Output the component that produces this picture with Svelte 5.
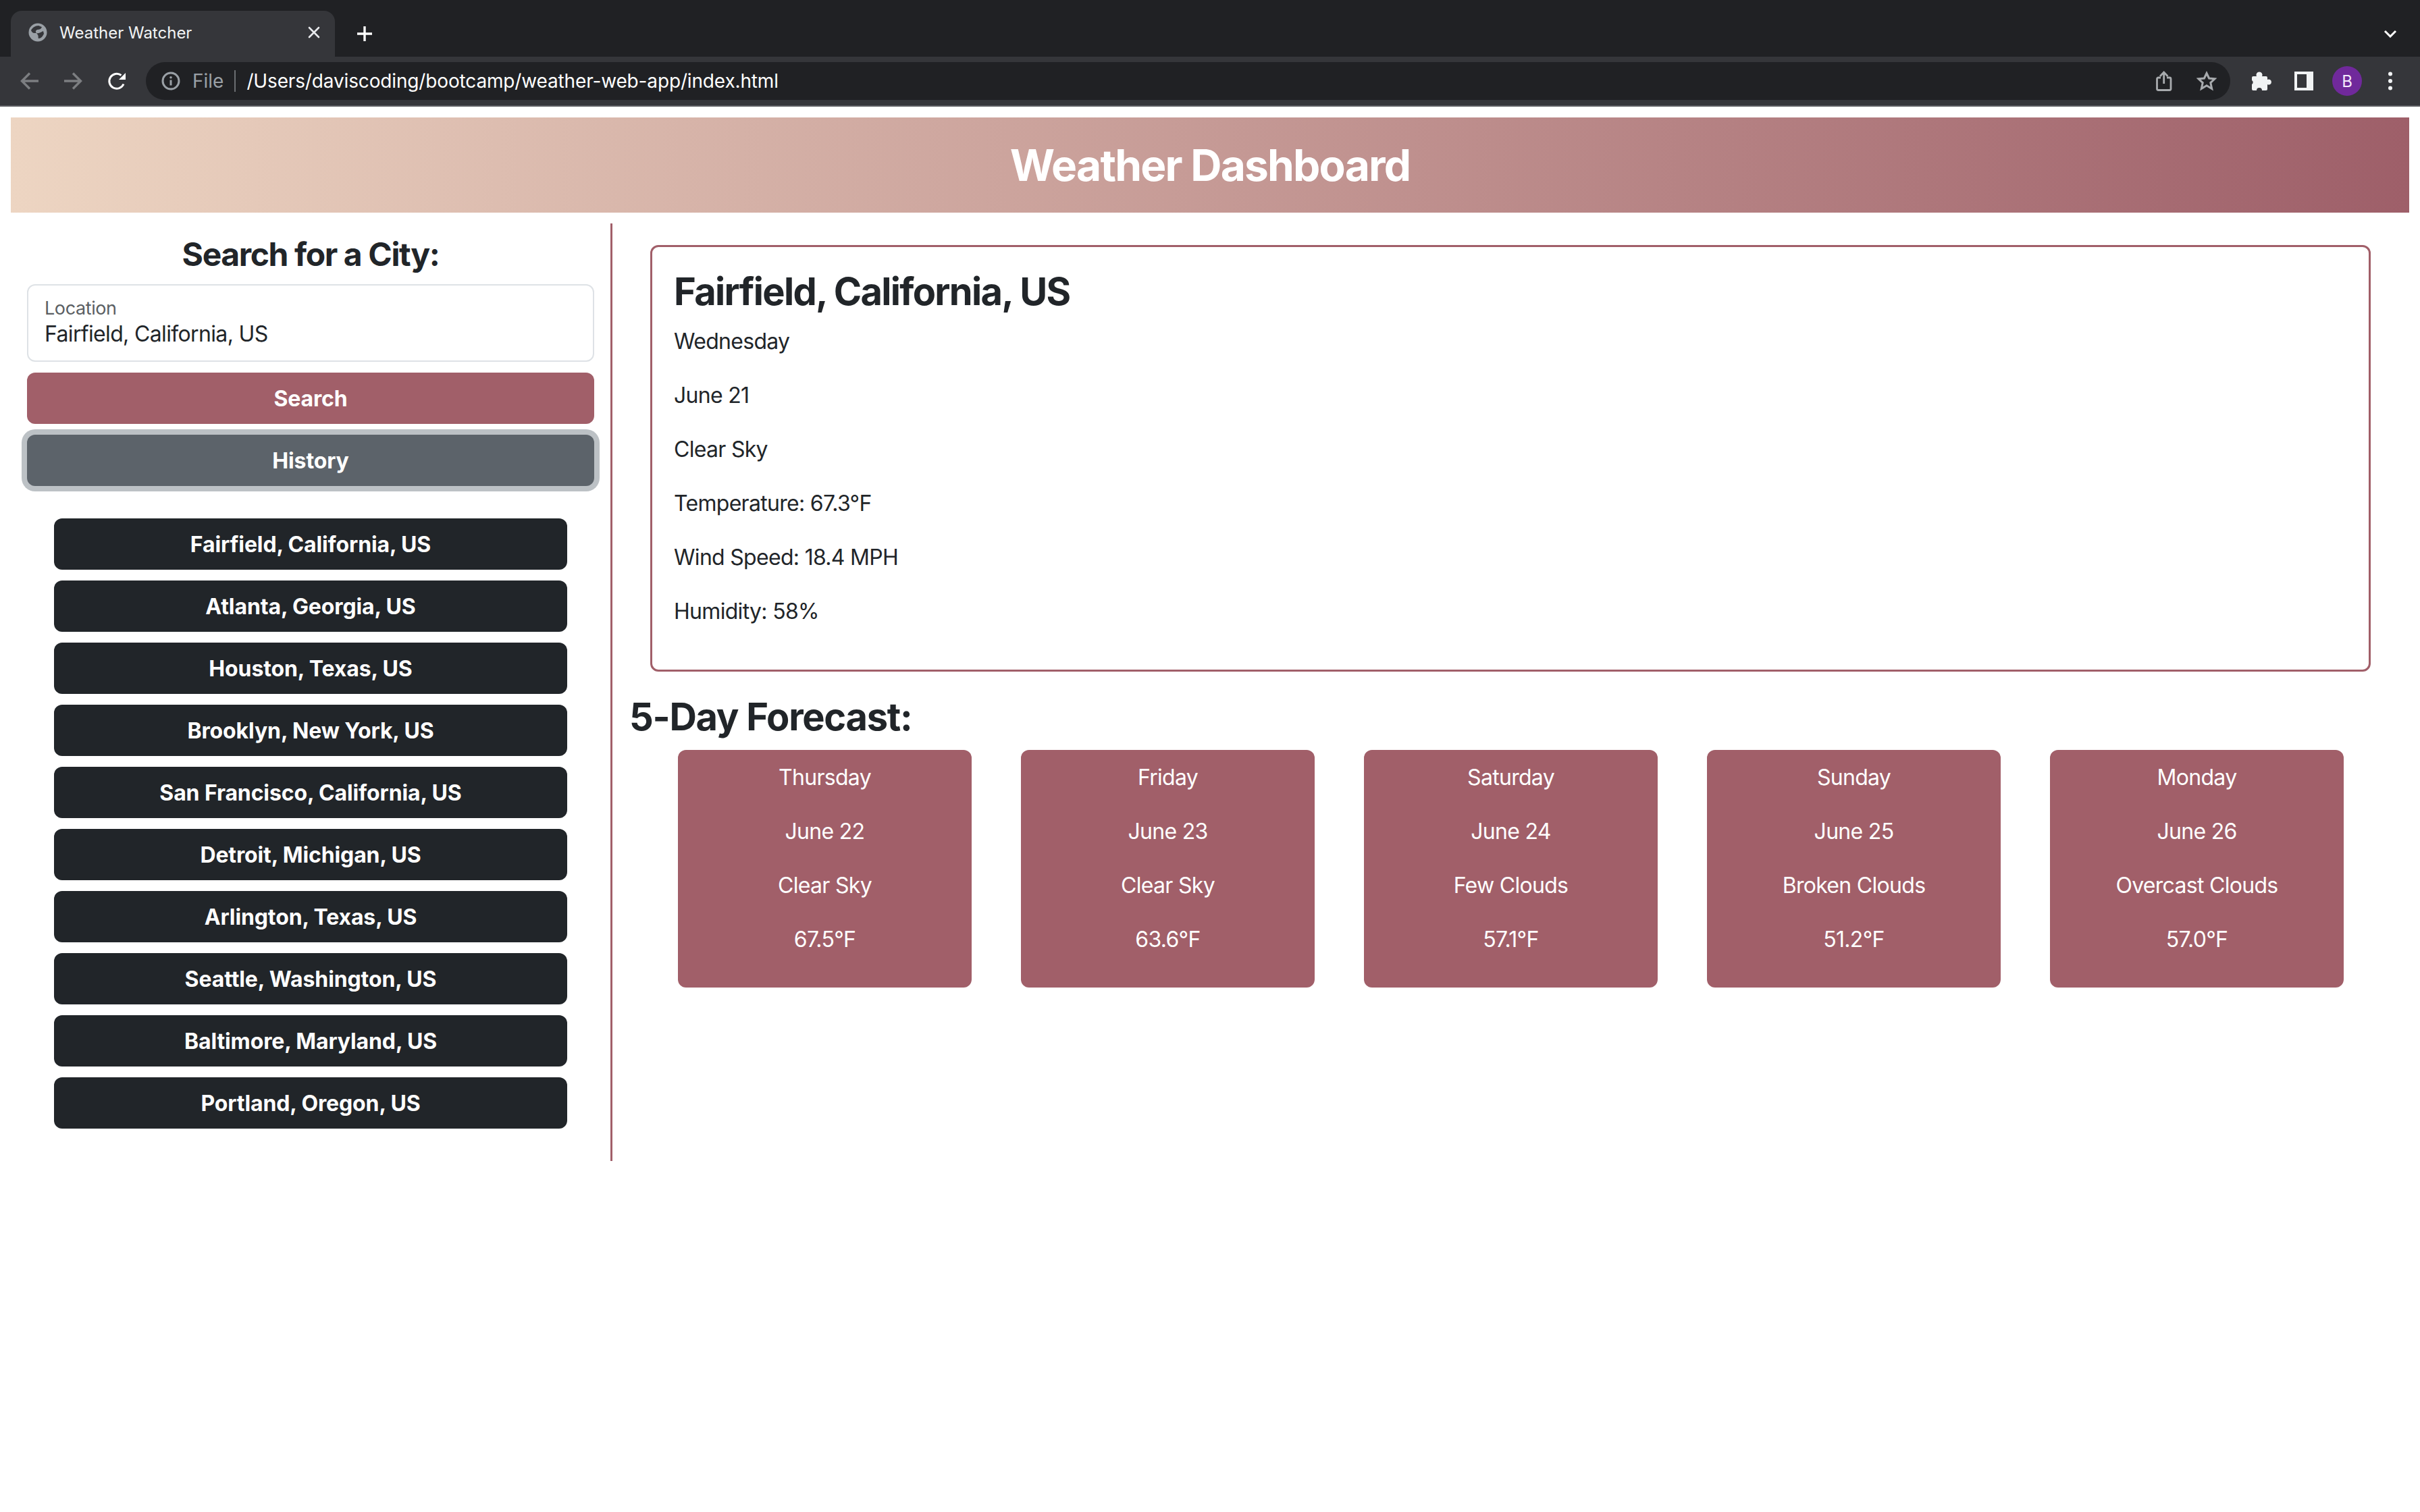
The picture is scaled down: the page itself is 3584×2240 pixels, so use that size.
<script>
  const cities = ['Fairfield, California, US','Atlanta, Georgia, US','Houston, Texas, US','Brooklyn, New York, US','San Francisco, California, US','Detroit, Michigan, US','Arlington, Texas, US','Seattle, Washington, US','Baltimore, Maryland, US','Portland, Oregon, US'];
  const current = ['Wednesday','June 21','Clear Sky','Temperature: 67.3°F','Wind Speed: 18.4 MPH','Humidity: 58%'];
  const forecast = [
    ['Thursday','June 22','Clear Sky','67.5°F'],
    ['Friday','June 23','Clear Sky','63.6°F'],
    ['Saturday','June 24','Few Clouds','57.1°F'],
    ['Sunday','June 25','Broken Clouds','51.2°F'],
    ['Monday','June 26','Overcast Clouds','57.0°F']
  ];
</script>

<div class="chrome">
  <div class="tabstrip">
    <div class="tab">
      <svg class="globe" viewBox="0 0 28 28"><circle cx="14" cy="14" r="13.500" fill="#9aa0a6"/><path d="M4 11 C6 7 10 4 15 4 L20 6 C19 9 16 10 13 10 C11 11 10 13 12 15 L9 15 C6 15 5 13 4 11Z M12 15 C15 16 18 14 22 12 L23 16 C21 20 19 23 15 23 C14 21 16 19 12 15Z" fill="#35363a"/></svg>
      <span class="tabtitle">Weather Watcher</span>
      <svg class="close" viewBox="0 0 18 18"><path d="M2 2 L16 16 M16 2 L2 16" stroke="#e8eaed" stroke-width="2.6" stroke-linecap="round"/></svg>
    </div>
    <svg class="plus" viewBox="0 0 24 24"><path d="M12 1 V23 M1 12 H23" stroke="#fff" stroke-width="3.4"/></svg>
    <svg class="chev" viewBox="0 0 20 12"><path d="M2 2 L10 10 L18 2" fill="none" stroke="#fff" stroke-width="3"/></svg>
  </div>
  <div class="toolbar">
    <svg class="nav" viewBox="0 0 28 28"><path d="M27 14 H3 M14 2.500 L2.500 14 L14 25.500" fill="none" stroke="#7c7e81" stroke-width="3.400"/></svg>
    <svg class="nav" viewBox="0 0 28 28"><path d="M1 14 H25 M14 2.500 L25.500 14 L14 25.500" fill="none" stroke="#7c7e81" stroke-width="3.400"/></svg>
    <svg class="nav" viewBox="0 0 28 28"><path d="M25 18.500 A11 11 0 1 1 21.500 5.500" fill="none" stroke="#fff" stroke-width="3"/><path d="M28 2 V12 H18Z" fill="#fff"/></svg>
    <div class="omnibox">
      <svg class="info" viewBox="0 0 28 28"><circle cx="14" cy="14" r="12" fill="none" stroke="#9aa0a6" stroke-width="3"/><path d="M14 12.500 V20.500" stroke="#9aa0a6" stroke-width="3"/><circle cx="14" cy="8.700" r="1.800" fill="#9aa0a6"/></svg>
      <span class="file">File</span>
      <span class="sep"></span>
      <span class="url">/Users/daviscoding/bootcamp/weather-web-app/index.html</span>
      <svg class="share" viewBox="0 0 24 30"><path d="M7 10 H3.500 A2 2 0 0 0 1.500 12 V26.500 A2 2 0 0 0 3.500 28.500 H20 A2 2 0 0 0 22 26.500 V12 A2 2 0 0 0 20 10 H16" fill="none" stroke="#a8abae" stroke-width="2.800"/><path d="M11.700 19 V3 M6 8 L11.700 2 L17.400 8" fill="none" stroke="#a8abae" stroke-width="2.800"/></svg>
      <svg class="star" viewBox="0 0 30 30"><path d="M15 3.500 L18.600 11 L27 11.800 L20.800 17.600 L22.700 26.500 L15 21.800 L7.300 26.500 L9.200 17.600 L3 11.800 L11.400 11Z" fill="none" stroke="#a8abae" stroke-width="3"/></svg>
    </div>
    <svg class="puzzle" viewBox="0 0 30 30"><path d="M3 8 H8 A4.500 4.500 0 1 1 16 8 H22 A2 2 0 0 1 24 10 V13 A4 4 0 1 1 24 20 V27 A2 2 0 0 1 22 29 H16 A4 4 0 0 0 8 29 H3 A2 2 0 0 1 1 27 V20 A3.500 3.500 0 0 0 1 14 V10 A2 2 0 0 1 3 8Z" fill="#f1f3f4"/></svg>
    <svg class="panel" viewBox="0 0 28 28"><path d="M0 0 H28 V28 H0Z M4 4 V24 H18 V4Z" fill="#f1f3f4" fill-rule="evenodd"/></svg>
    <div class="avatar">B</div>
    <svg class="dots" viewBox="0 0 16 28"><circle cx="8" cy="3.500" r="3" fill="#f1f3f4"/><circle cx="8" cy="14" r="3" fill="#f1f3f4"/><circle cx="8" cy="24.500" r="3" fill="#f1f3f4"/></svg>
  </div>
</div>

<div class="page">
  <header class="hero"><h1>Weather Dashboard</h1></header>
  <div class="row">
    <aside class="side">
      <h4>Search for a City:</h4>
      <div class="field">
        <label for="loc">Location</label>
        <input id="loc" value="Fairfield, California, US" />
      </div>
      <button class="btn search">Search</button>
      <button class="btn history">History</button>
      <div class="list">
        {#each cities as c}
          <button class="btn city">{c}</button>
        {/each}
      </div>
    </aside>
    <main class="main">
      <section class="today">
        <h3>Fairfield, California, US</h3>
        {#each current as t}<p>{t}</p>{/each}
      </section>
      <h3 class="fh">5-Day Forecast:</h3>
      <div class="cards">
        {#each forecast as day}
          <div class="card">
            {#each day as t}<p>{t}</p>{/each}
          </div>
        {/each}
      </div>
    </main>
  </div>
</div>

<style>
  :global(body) { margin: 0; background: #fff; font-family: Inter, "Liberation Sans", sans-serif; color: #212529; }
  .chrome { height: 158px; background: #35363a; border-bottom: 2px solid #5c5d61; box-sizing: border-box; display: flex; flex-direction: column; }
  .tabstrip { height: 84px; background: #202124; display: flex; align-items: flex-start; padding-left: 16px; padding-right: 34px; box-sizing: border-box; }
  .tab { width: 480px; height: 68px; margin-top: 16px; background: #35363a; border-radius: 16px 16px 0 0; display: flex; align-items: center; padding: 0 22px 4px 26px; box-sizing: border-box; color: #e8eaed; }
  .globe { width: 28px; height: 28px; }
  .tabtitle { font-size: 24px; margin-left: 18px; flex: 1; color: #f1f3f4; }
  .close { width: 18px; height: 18px; }
  .plus { width: 24px; height: 24px; margin: 38px 0 0 32px; }
  .chev { width: 20px; height: 12px; margin: 44px 0 0 auto; }
  .toolbar { height: 72px; display: flex; align-items: center; padding: 0 36px 0 30px; box-sizing: border-box; }
  .nav { width: 28px; height: 28px; margin-right: 36px; }
  .nav:nth-child(3) { margin-right: 30px; }
  .omnibox { flex: 1; height: 56px; background: #202124; border-radius: 28px; display: flex; align-items: center; padding: 0 20px 0 23px; box-sizing: border-box; margin-right: 31px; }
  .info { width: 28px; height: 28px; }
  .file { font-size: 28px; color: #9aa0a6; margin-left: 18px; }
  .sep { width: 2px; height: 32px; background: #6b6e72; margin: 0 16px 0 16px; }
  .url { font-size: 28px; color: #fff; flex: 1; letter-spacing: -0.15px; }
  .share { width: 24px; height: 30px; margin-right: 36px; }
  .star { width: 30px; height: 30px; }
  .puzzle { width: 30px; height: 30px; margin-right: 34px; }
  .panel { width: 28px; height: 28px; margin-right: 28px; }
  .avatar { width: 44px; height: 44px; border-radius: 50%; background: #70299b; color: #f3e8fb; font-size: 24px; display: flex; align-items: center; justify-content: center; margin-right: 34px; }
  .dots { width: 16px; height: 28px; }

  .page { padding: 16px 16px 0; }
  .hero { height: 141px; background: linear-gradient(90deg, #edd5c2, #9e5f69); display: flex; align-items: center; justify-content: center; }
  h1 { margin: 0; font-size: 64px; font-weight: 700; color: #fff; line-height: 1.2; letter-spacing: -1.8px; padding-top: 2px; }
  .row { display: flex; margin-top: 16px; height: 1389px; }
  .side { width: 891px; box-sizing: border-box; border-right: 3px solid #a15f69; padding: 17px 24px 0 24px; display: flex; flex-direction: column; flex: none; }
  h4 { margin: 0 0 15px; font-size: 48px; line-height: 58px; font-weight: 700; text-align: center; letter-spacing: -1.4px; }
  .field { height: 115px; border: 2px solid #dee2e6; border-radius: 12px; box-sizing: border-box; padding: 18px 24px 0; margin-bottom: 16px; display: flex; flex-direction: column; }
  label { font-size: 27px; line-height: 32px; color: #5b5f63; letter-spacing: -0.4px; }
  input { border: 0; padding: 0; margin: 0; font: inherit; font-size: 32px; line-height: 44px; height: 44px; color: #212529; background: none; outline: none; letter-spacing: -0.65px; }
  .btn { display: block; width: 100%; height: 76px; border: 0; border-radius: 12px; color: #fff; font-family: inherit; font-size: 32px; font-weight: 700; padding: 0; letter-spacing: -0.12px; }
  .search { background: #a15f69; margin-bottom: 16px; }
  .history { background: #5c636a; box-shadow: 0 0 0 8px #bcc1c5; }
  .list { margin-top: 48px; padding: 0 40px; display: flex; flex-direction: column; gap: 16px; }
  .city { background: #212529; }
  .main { flex: 1; min-width: 0; padding-top: 32px; }
  h3 { margin: 0 0 16px; font-size: 56px; line-height: 67px; font-weight: 700; letter-spacing: -1.7px; }
  .today { margin: 0 57px 34px 56px; border: 3px solid #a15f69; border-radius: 12px; padding: 33px 32px; height: 632px; box-sizing: border-box; }
  p { margin: 0 0 32px; font-size: 32px; line-height: 48px; letter-spacing: -0.7px; }
  .fh { padding-left: 25px; margin-bottom: 15px; letter-spacing: -1.3px; }
  .cards { display: grid; grid-template-columns: repeat(5, 1fr); gap: 73px; margin: 0 97px 0 97px; }
  .card { background: #a15f69; border-radius: 12px; padding: 17px 16px 15px; color: #fff; text-align: center; }
</style>
